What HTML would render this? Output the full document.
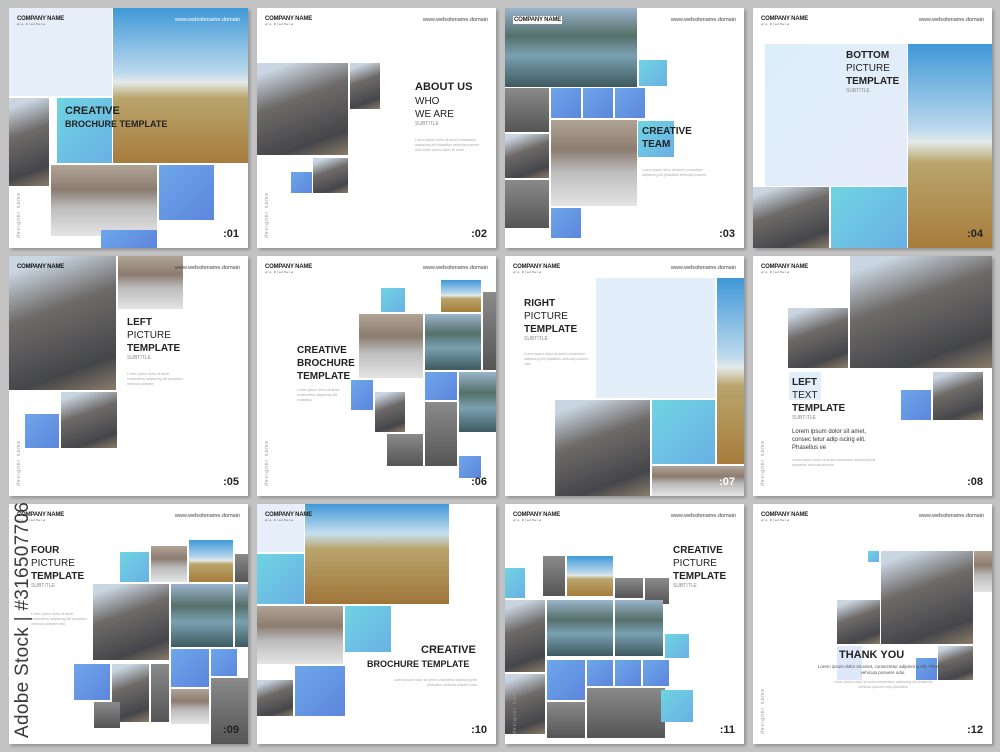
<!DOCTYPE html>
<html><head><meta charset="utf-8"><style>
*{margin:0;padding:0;box-sizing:border-box}
body{width:1000px;height:752px;background:#c3c3c3;position:relative;overflow:hidden;font-family:"Liberation Sans",sans-serif;color:#222}
.c{position:absolute;width:239px;height:240px;background:#fff;box-shadow:2px 2px 3px rgba(0,0,0,.25);overflow:hidden}
.c>div{position:absolute}
.hd{left:8px;top:8px;font-size:6px;font-weight:bold;letter-spacing:-.2px}
.hd i{display:block;font-style:normal;font-size:3px;letter-spacing:1px;font-weight:normal}
.ws{right:8px;top:9px;font-size:5.5px;color:#444}
.pn{right:9px;bottom:8px;font-size:11px;font-weight:bold}
.dn{left:4px;bottom:10px;font-size:5px;color:#999;transform:rotate(-90deg);transform-origin:left bottom;width:60px;left:13px;letter-spacing:1px}
.t{font-weight:bold;font-size:11px;line-height:13px}
.t small{display:block;font-size:5px;color:#888;font-weight:normal;line-height:7px}
.p{font-size:3.5px;color:#aaa;line-height:5px;width:70px}
.sky{background:linear-gradient(#3f98d8,#bcd9ec 42%,#e4eaea 48%,#b9a56c 58%,#a77c3c)}
.bld{background:linear-gradient(160deg,#c9d6e2 10%,#6e6a68 40%,#45464a 80%,#8a7c6a)}
.str{background:linear-gradient(#b0a496,#8c7c70 35%,#bcbcbc 60%,#e4e4e4)}
.lake{background:linear-gradient(#9ab4cc,#55706a 35%,#7aa0b0 60%,#3e5a60)}
.blu{background:linear-gradient(135deg,#6ea6ea,#5c86dc)}
.cy{background:linear-gradient(135deg,#6fd4e2,#6ab0e4)}
.lt{background:#e6eefa}
.gr{background:linear-gradient(#8a8a8a,#555)}
</style></head><body>

<!-- 1 -->
<div class="c" style="left:9px;top:8px">
<div class="lt" style="left:0;top:0;width:103px;height:88px"></div>
<div class="sky" style="left:104px;top:0;width:135px;height:155px"></div>
<div class="cy" style="left:48px;top:90px;width:55px;height:65px"></div>
<div class="bld" style="left:0;top:90px;width:40px;height:88px"></div>
<div class="str" style="left:42px;top:157px;width:106px;height:71px"></div>
<div class="blu" style="left:150px;top:157px;width:55px;height:55px"></div>
<div class="blu" style="left:92px;top:222px;width:56px;height:18px"></div>
<div class="hd">COMPANY NAME<i>pro brochure</i></div><div class="ws" style="color:#fff">www.websitename.domain</div>
<div class="t" style="left:56px;top:97px">CREATIVE</div>
<div style="left:56px;top:111px;font-size:9px;font-weight:bold">BROCHURE TEMPLATE</div>
<div class="dn">designer name</div><div class="pn">:01</div>
</div>

<!-- 2 -->
<div class="c" style="left:257px;top:8px">
<div class="hd">COMPANY NAME<i>pro brochure</i></div><div class="ws">www.websitename.domain</div>
<div class="bld" style="left:0;top:55px;width:91px;height:92px"></div>
<div class="bld" style="left:93px;top:55px;width:30px;height:46px"></div>
<div class="bld" style="left:56px;top:150px;width:35px;height:35px"></div>
<div class="blu" style="left:34px;top:164px;width:21px;height:21px"></div>
<div class="t" style="left:158px;top:73px">ABOUT US</div>
<div class="t" style="left:158px;top:87px;font-size:10px;font-weight:normal">WHO<br>WE ARE<small>SUBTITLE</small></div>
<div class="p" style="left:158px;top:130px">Lorem ipsum dolor sit amet consectetur adipiscing elit phasellus vehicula posuere odio lorem ipsum dolor sit amet</div>
<div class="dn">designer name</div><div class="pn">:02</div>
</div>

<!-- 3 -->
<div class="c" style="left:505px;top:8px">
<div class="lake" style="left:0;top:0;width:132px;height:79px"></div>
<div class="gr" style="left:0;top:80px;width:44px;height:44px"></div>
<div class="bld" style="left:0;top:126px;width:44px;height:44px"></div>
<div class="gr" style="left:0;top:172px;width:44px;height:48px"></div>
<div class="blu" style="left:46px;top:80px;width:30px;height:30px"></div>
<div class="blu" style="left:78px;top:80px;width:30px;height:30px"></div>
<div class="blu" style="left:110px;top:80px;width:30px;height:30px"></div>
<div class="str" style="left:46px;top:112px;width:86px;height:86px"></div>
<div class="blu" style="left:46px;top:200px;width:30px;height:30px"></div>
<div class="cy" style="left:134px;top:52px;width:28px;height:26px"></div>
<div class="cy" style="left:133px;top:113px;width:36px;height:36px"></div>
<div class="hd" style="background:#fff;padding:1px">COMPANY NAME</div><div class="ws">www.websitename.domain</div>
<div class="t" style="left:137px;top:117px;font-size:10px">CREATIVE<br>TEAM</div>
<div class="p" style="left:137px;top:160px">Lorem ipsum dolor sit amet consectetur adipiscing elit phasellus vehicula posuere</div>
<div class="pn">:03</div>
</div>

<!-- 4 -->
<div class="c" style="left:753px;top:8px">
<div class="hd">COMPANY NAME<i>pro brochure</i></div><div class="ws">www.websitename.domain</div>
<div style="left:12px;top:36px;width:142px;height:142px;background:linear-gradient(135deg,#dbeefa,#e8ecfa)"></div>
<div class="sky" style="left:155px;top:36px;width:84px;height:204px"></div>
<div class="bld" style="left:0;top:179px;width:76px;height:61px"></div>
<div class="cy" style="left:78px;top:179px;width:76px;height:61px"></div>
<div class="t" style="left:93px;top:41px;font-size:10px">BOTTOM<br><span style="font-weight:normal">PICTURE</span><br>TEMPLATE<small>SUBTITLE</small></div>
<div class="pn">:04</div>
</div>

<!-- 5 -->
<div class="c" style="left:9px;top:256px">
<div class="bld" style="left:0;top:0;width:107px;height:134px"></div>
<div class="str" style="left:109px;top:0;width:65px;height:53px"></div>
<div class="blu" style="left:16px;top:158px;width:34px;height:34px"></div>
<div class="bld" style="left:52px;top:136px;width:56px;height:56px"></div>
<div class="hd" style="color:#111">COMPANY NAME</div><div class="ws">www.websitename.domain</div>
<div class="t" style="left:118px;top:60px;font-size:10px">LEFT<br><span style="font-weight:normal">PICTURE</span><br>TEMPLATE<small>SUBTITLE</small></div>
<div class="p" style="left:118px;top:116px;width:60px">Lorem ipsum dolor sit amet consectetur adipiscing elit phasellus vehicula posuere</div>
<div class="dn">designer name</div><div class="pn">:05</div>
</div>

<!-- 6 -->
<div class="c" style="left:257px;top:256px">
<div class="hd">COMPANY NAME<i>pro brochure</i></div><div class="ws">www.websitename.domain</div>
<div class="cy" style="left:124px;top:32px;width:24px;height:24px"></div>
<div class="sky" style="left:184px;top:24px;width:40px;height:32px"></div>
<div class="str" style="left:102px;top:58px;width:64px;height:64px"></div>
<div class="lake" style="left:168px;top:58px;width:56px;height:56px"></div>
<div class="gr" style="left:226px;top:36px;width:13px;height:78px"></div>
<div class="blu" style="left:168px;top:116px;width:32px;height:28px"></div>
<div class="lake" style="left:202px;top:116px;width:37px;height:60px"></div>
<div class="blu" style="left:94px;top:124px;width:22px;height:30px"></div>
<div class="bld" style="left:118px;top:136px;width:30px;height:40px"></div>
<div class="gr" style="left:130px;top:178px;width:36px;height:32px"></div>
<div class="gr" style="left:168px;top:146px;width:32px;height:64px"></div>
<div class="blu" style="left:202px;top:200px;width:22px;height:22px"></div>
<div class="t" style="left:40px;top:88px;font-size:10px">CREATIVE<br>BROCHURE<br>TEMPLATE</div>
<div class="p" style="left:40px;top:132px;width:52px">Lorem ipsum dolor sit amet consectetur adipiscing elit phasellus</div>
<div class="dn">designer name</div><div class="pn">:06</div>
</div>

<!-- 7 -->
<div class="c" style="left:505px;top:256px">
<div class="hd">COMPANY NAME<i>pro brochure</i></div><div class="ws">www.websitename.domain</div>
<div style="left:91px;top:22px;width:119px;height:120px;background:#e2eefa"></div>
<div class="sky" style="left:212px;top:22px;width:27px;height:186px"></div>
<div class="bld" style="left:50px;top:144px;width:95px;height:96px"></div>
<div class="cy" style="left:147px;top:144px;width:63px;height:64px"></div>
<div class="str" style="left:147px;top:210px;width:92px;height:30px"></div>
<div class="t" style="left:19px;top:41px;font-size:10px">RIGHT<br><span style="font-weight:normal">PICTURE</span><br>TEMPLATE<small>SUBTITLE</small></div>
<div class="p" style="left:19px;top:96px;width:65px">Lorem ipsum dolor sit amet consectetur adipiscing elit phasellus vehicula posuere odio</div>
<div class="pn" style="color:#fff">:07</div>
</div>

<!-- 8 -->
<div class="c" style="left:753px;top:256px">
<div class="hd">COMPANY NAME<i>pro brochure</i></div><div class="ws">www.websitename.domain</div>
<div class="bld" style="left:97px;top:0;width:142px;height:112px"></div>
<div class="bld" style="left:35px;top:52px;width:60px;height:60px"></div>
<div style="left:36px;top:116px;width:32px;height:28px;background:#e2eefa"></div>
<div class="blu" style="left:148px;top:134px;width:30px;height:30px"></div>
<div class="bld" style="left:180px;top:116px;width:50px;height:48px"></div>
<div class="t" style="left:39px;top:120px;font-size:10px">LEFT<br><span style="font-weight:normal">TEXT</span><br>TEMPLATE<small>SUBTITLE</small></div>
<div style="left:39px;top:172px;font-size:6px;line-height:8px;width:80px;color:#333">Lorem ipsum dolor sit amet, consec tetur adip iscing elit. Phasellus ve</div>
<div class="p" style="left:39px;top:202px;width:90px">Lorem ipsum dolor sit amet consectetur adipiscing elit phasellus vehicula posuere</div>
<div class="dn">designer name</div><div class="pn">:08</div>
</div>

<!-- 9 -->
<div class="c" style="left:9px;top:504px">
<div class="hd">COMPANY NAME<i>pro brochure</i></div><div class="ws">www.websitename.domain</div>
<div class="cy" style="left:111px;top:48px;width:29px;height:30px"></div>
<div class="str" style="left:142px;top:42px;width:36px;height:36px"></div>
<div class="sky" style="left:180px;top:36px;width:44px;height:42px"></div>
<div class="gr" style="left:226px;top:50px;width:13px;height:28px"></div>
<div class="bld" style="left:84px;top:80px;width:76px;height:76px"></div>
<div class="lake" style="left:162px;top:80px;width:62px;height:63px"></div>
<div class="lake" style="left:226px;top:80px;width:13px;height:63px"></div>
<div class="blu" style="left:162px;top:145px;width:38px;height:38px"></div>
<div class="blu" style="left:202px;top:145px;width:26px;height:27px"></div>
<div class="blu" style="left:65px;top:160px;width:36px;height:36px"></div>
<div class="bld" style="left:103px;top:160px;width:37px;height:58px"></div>
<div class="gr" style="left:142px;top:160px;width:18px;height:58px"></div>
<div class="str" style="left:162px;top:185px;width:38px;height:35px"></div>
<div class="gr" style="left:202px;top:174px;width:37px;height:66px"></div>
<div class="gr" style="left:85px;top:198px;width:26px;height:26px"></div>
<div class="t" style="left:22px;top:40px;font-size:10px">FOUR<br><span style="font-weight:normal">PICTURE</span><br>TEMPLATE<small>SUBTITLE</small></div>
<div class="p" style="left:22px;top:108px;width:60px">Lorem ipsum dolor sit amet consectetur adipiscing elit phasellus vehicula posuere odio</div>
<div class="pn">:09</div>
</div>

<!-- 10 -->
<div class="c" style="left:257px;top:504px">
<div class="lt" style="left:0;top:0;width:47px;height:48px"></div>
<div class="sky" style="left:48px;top:0;width:144px;height:100px;background:linear-gradient(#3f98d8,#c8e0ee 30%,#b9a56c 45%,#a0753a)"></div>
<div class="cy" style="left:0;top:50px;width:47px;height:50px"></div>
<div class="str" style="left:0;top:102px;width:86px;height:58px"></div>
<div class="cy" style="left:88px;top:102px;width:46px;height:46px"></div>
<div class="blu" style="left:38px;top:162px;width:50px;height:50px"></div>
<div class="bld" style="left:0;top:176px;width:36px;height:36px"></div>
<div class="hd">COMPANY NAME<i>pro brochure</i></div>
<div class="t" style="left:164px;top:140px;font-size:11px">CREATIVE</div>
<div style="left:110px;top:155px;font-size:9px;font-weight:bold">BROCHURE TEMPLATE</div>
<div class="p" style="left:130px;top:174px;width:90px;text-align:right">Lorem ipsum dolor sit amet consectetur adipiscing elit phasellus vehicula posuere odio</div>
<div class="pn">:10</div>
</div>

<!-- 11 -->
<div class="c" style="left:505px;top:504px">
<div class="hd">COMPANY NAME<i>pro brochure</i></div><div class="ws">www.websitename.domain</div>
<div class="gr" style="left:38px;top:52px;width:22px;height:40px"></div>
<div class="cy" style="left:0;top:64px;width:20px;height:30px"></div>
<div class="sky" style="left:62px;top:52px;width:46px;height:40px"></div>
<div class="gr" style="left:110px;top:74px;width:28px;height:20px"></div>
<div class="gr" style="left:140px;top:74px;width:24px;height:26px"></div>
<div class="bld" style="left:0;top:96px;width:40px;height:72px"></div>
<div class="lake" style="left:42px;top:96px;width:66px;height:56px"></div>
<div class="lake" style="left:110px;top:96px;width:48px;height:56px"></div>
<div class="cy" style="left:160px;top:130px;width:24px;height:24px"></div>
<div class="blu" style="left:42px;top:156px;width:38px;height:40px"></div>
<div class="blu" style="left:82px;top:156px;width:26px;height:26px"></div>
<div class="blu" style="left:110px;top:156px;width:26px;height:26px"></div>
<div class="blu" style="left:138px;top:156px;width:26px;height:26px"></div>
<div class="bld" style="left:0;top:170px;width:40px;height:60px"></div>
<div class="gr" style="left:42px;top:198px;width:38px;height:36px"></div>
<div class="gr" style="left:82px;top:184px;width:78px;height:50px"></div>
<div class="cy" style="left:156px;top:186px;width:32px;height:32px"></div>
<div class="t" style="left:168px;top:40px;font-size:10px">CREATIVE<br><span style="font-weight:normal">PICTURE</span><br>TEMPLATE<small>SUBTITLE</small></div>
<div class="dn">designer name</div><div class="pn">:11</div>
</div>

<!-- 12 -->
<div class="c" style="left:753px;top:504px">
<div class="hd">COMPANY NAME<i>pro brochure</i></div><div class="ws">www.websitename.domain</div>
<div class="cy" style="left:115px;top:47px;width:11px;height:11px"></div>
<div class="bld" style="left:128px;top:47px;width:92px;height:93px"></div>
<div class="str" style="left:221px;top:47px;width:18px;height:41px"></div>
<div class="bld" style="left:84px;top:96px;width:43px;height:44px"></div>
<div style="left:84px;top:142px;width:25px;height:34px;background:#dde8fa"></div>
<div class="blu" style="left:163px;top:154px;width:21px;height:22px"></div>
<div class="bld" style="left:185px;top:142px;width:35px;height:34px"></div>
<div class="t" style="left:86px;top:145px;font-size:11px">THANK YOU</div>
<div style="left:60px;top:160px;font-size:4.5px;color:#555;width:140px;text-align:center;line-height:6px">Lorem ipsum dolor sit amet, consectetur adipiscing elit. Phasellus vehicula posuere odio.</div>
<div class="p" style="left:80px;top:176px;width:100px;text-align:center">Lorem ipsum dolor sit amet consectetur adipiscing elit phasellus vehicula posuere odio phasellus</div>
<div class="dn">designer name</div><div class="pn">:12</div>
</div>

<div style="position:absolute;left:12px;top:738px;transform:rotate(-90deg);transform-origin:left top;font-size:19px;color:#3a3a3a;white-space:nowrap;letter-spacing:.3px">Adobe Stock | #316507706</div>
</body></html>
